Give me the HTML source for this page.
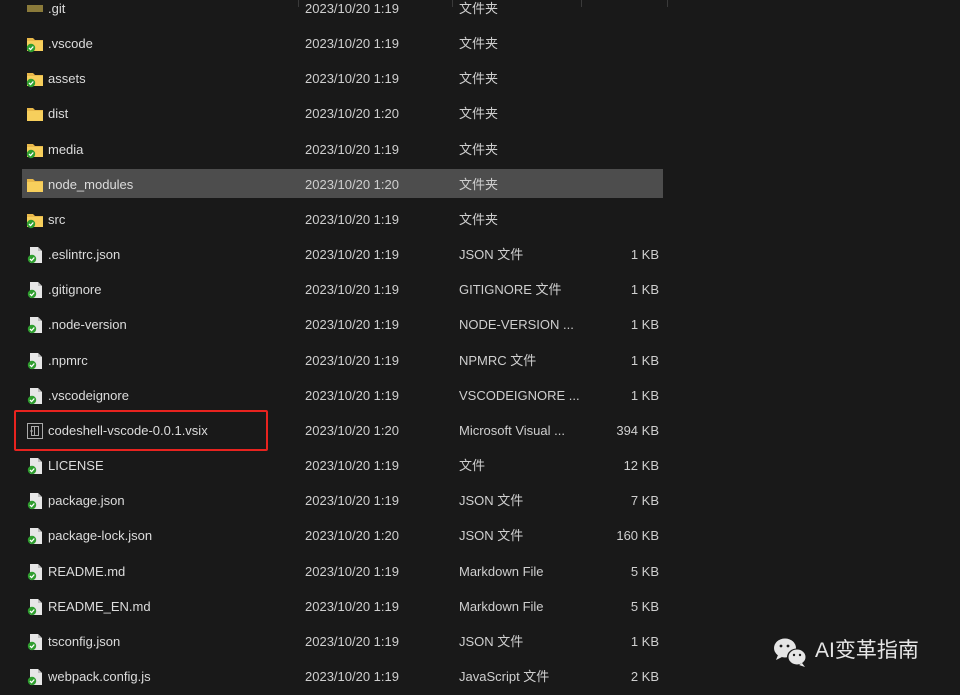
<!DOCTYPE html>
<html><head><meta charset="utf-8"><style>
body{margin:0;width:960px;height:695px;background:#191919;overflow:hidden;position:relative;font-family:"Liberation Sans","Noto Sans CJK SC",sans-serif;font-size:13px;color:#dcdcdc}
.sep{position:absolute;top:0;width:1px;height:7px;background:#3a3a3a}
.r{position:absolute;left:0;width:960px;height:20px;line-height:20px;margin-top:1px}
.r span{position:absolute;top:0;white-space:nowrap}
.n{left:48px}.d{left:305px;color:#cfcfcf}.t{left:459px;color:#cfcfcf}.s{right:301px;color:#cfcfcf}
.ic{position:absolute;left:25px;top:1px;width:19px;height:18px}
.hl{position:absolute;left:22px;top:169px;width:641px;height:29px;background:#4d4d4d}
.box{position:absolute;left:14px;top:410px;width:250px;height:37px;border:2px solid #e8231f;border-radius:2px}
</style></head><body>
<div class="sep" style="left:298px"></div><div class="sep" style="left:452px"></div><div class="sep" style="left:581px"></div><div class="sep" style="left:667px"></div>
<div class="hl"></div>
<svg width="0" height="0" style="position:absolute"><defs>
<g id="fg"><path d="M2 3h6l2 2h8v11H2z" fill="#e8b84a"/><path d="M2 6h16v10H2z" fill="#f7cf5c"/><circle cx="6" cy="13" r="4.2" fill="#2f9e2f"/><path d="M4 13l1.6 1.6L8.3 11.5" stroke="#fff" stroke-width="1.3" fill="none"/></g>
<g id="ff"><path d="M2 3h6l2 2h8v11H2z" fill="#e8b84a"/><path d="M2 6h16v10H2z" fill="#f7cf5c"/></g>
<g id="fl"><path d="M5 1h8l4 4v12H5z" fill="#e6e6e6"/><path d="M13 1v4h4" fill="#bdbdbd"/><circle cx="7" cy="13" r="4.2" fill="#2f9e2f"/><path d="M5 13l1.6 1.6L9.3 11.5" stroke="#fff" stroke-width="1.3" fill="none"/></g>
</defs></svg>
<div class="r" style="top:-2px"><svg class="ic"><path d="M2 5h16v7H2z" fill="#8a7a3a"/></svg><span class="n">.git</span><span class="d">2023/10/20 1:19</span><span class="t">文件夹</span></div>
<div class="r" style="top:33px"><svg class="ic"><use href="#fg"/></svg><span class="n">.vscode</span><span class="d">2023/10/20 1:19</span><span class="t">文件夹</span></div>
<div class="r" style="top:68px"><svg class="ic"><use href="#fg"/></svg><span class="n">assets</span><span class="d">2023/10/20 1:19</span><span class="t">文件夹</span></div>
<div class="r" style="top:103px"><svg class="ic"><use href="#ff"/></svg><span class="n">dist</span><span class="d">2023/10/20 1:20</span><span class="t">文件夹</span></div>
<div class="r" style="top:139px"><svg class="ic"><use href="#fg"/></svg><span class="n">media</span><span class="d">2023/10/20 1:19</span><span class="t">文件夹</span></div>
<div class="r" style="top:174px"><svg class="ic"><use href="#ff"/></svg><span class="n">node_modules</span><span class="d">2023/10/20 1:20</span><span class="t">文件夹</span></div>
<div class="r" style="top:209px"><svg class="ic"><use href="#fg"/></svg><span class="n">src</span><span class="d">2023/10/20 1:19</span><span class="t">文件夹</span></div>
<div class="r" style="top:244px"><svg class="ic"><use href="#fl"/></svg><span class="n">.eslintrc.json</span><span class="d">2023/10/20 1:19</span><span class="t">JSON 文件</span><span class="s">1 KB</span></div>
<div class="r" style="top:279px"><svg class="ic"><use href="#fl"/></svg><span class="n">.gitignore</span><span class="d">2023/10/20 1:19</span><span class="t">GITIGNORE 文件</span><span class="s">1 KB</span></div>
<div class="r" style="top:314px"><svg class="ic"><use href="#fl"/></svg><span class="n">.node-version</span><span class="d">2023/10/20 1:19</span><span class="t">NODE-VERSION ...</span><span class="s">1 KB</span></div>
<div class="r" style="top:350px"><svg class="ic"><use href="#fl"/></svg><span class="n">.npmrc</span><span class="d">2023/10/20 1:19</span><span class="t">NPMRC 文件</span><span class="s">1 KB</span></div>
<div class="r" style="top:385px"><svg class="ic"><use href="#fl"/></svg><span class="n">.vscodeignore</span><span class="d">2023/10/20 1:19</span><span class="t">VSCODEIGNORE ...</span><span class="s">1 KB</span></div>
<div class="r" style="top:420px"><svg class="ic"><rect x="2.5" y="1.5" width="15" height="15" fill="none" stroke="#aaa"/><rect x="6.5" y="4.5" width="7" height="9" fill="none" stroke="#aaa"/><path d="M5 9h3M9.5 4.5v9" stroke="#aaa"/></svg><span class="n">codeshell-vscode-0.0.1.vsix</span><span class="d">2023/10/20 1:20</span><span class="t">Microsoft Visual ...</span><span class="s">394 KB</span></div>
<div class="r" style="top:455px"><svg class="ic"><use href="#fl"/></svg><span class="n">LICENSE</span><span class="d">2023/10/20 1:19</span><span class="t">文件</span><span class="s">12 KB</span></div>
<div class="r" style="top:490px"><svg class="ic"><use href="#fl"/></svg><span class="n">package.json</span><span class="d">2023/10/20 1:19</span><span class="t">JSON 文件</span><span class="s">7 KB</span></div>
<div class="r" style="top:525px"><svg class="ic"><use href="#fl"/></svg><span class="n">package-lock.json</span><span class="d">2023/10/20 1:20</span><span class="t">JSON 文件</span><span class="s">160 KB</span></div>
<div class="r" style="top:561px"><svg class="ic"><use href="#fl"/></svg><span class="n">README.md</span><span class="d">2023/10/20 1:19</span><span class="t">Markdown File</span><span class="s">5 KB</span></div>
<div class="r" style="top:596px"><svg class="ic"><use href="#fl"/></svg><span class="n">README_EN.md</span><span class="d">2023/10/20 1:19</span><span class="t">Markdown File</span><span class="s">5 KB</span></div>
<div class="r" style="top:631px"><svg class="ic"><use href="#fl"/></svg><span class="n">tsconfig.json</span><span class="d">2023/10/20 1:19</span><span class="t">JSON 文件</span><span class="s">1 KB</span></div>
<div class="r" style="top:666px"><svg class="ic"><use href="#fl"/></svg><span class="n">webpack.config.js</span><span class="d">2023/10/20 1:19</span><span class="t">JavaScript 文件</span><span class="s">2 KB</span></div>
<div class="box"></div>
<svg style="position:absolute;left:772px;top:637px" width="38" height="32"><ellipse cx="13" cy="11" rx="11" ry="9.5" fill="#e6e6e6"/><path d="M6 18l-2 5 6-3z" fill="#e6e6e6"/><ellipse cx="25" cy="20" rx="10" ry="8.5" fill="#191919"/><ellipse cx="25" cy="20" rx="8.5" ry="7.5" fill="#e6e6e6"/><path d="M30 26l3 4-6-2z" fill="#e6e6e6"/><circle cx="9" cy="9" r="1.4" fill="#191919"/><circle cx="16" cy="9" r="1.4" fill="#191919"/><circle cx="22" cy="18" r="1.2" fill="#191919"/><circle cx="28" cy="18" r="1.2" fill="#191919"/></svg>
<div style="position:absolute;left:815px;top:638px;font-size:21px;color:#e6e6e6;line-height:26px">AI变革指南</div>
</body></html>
